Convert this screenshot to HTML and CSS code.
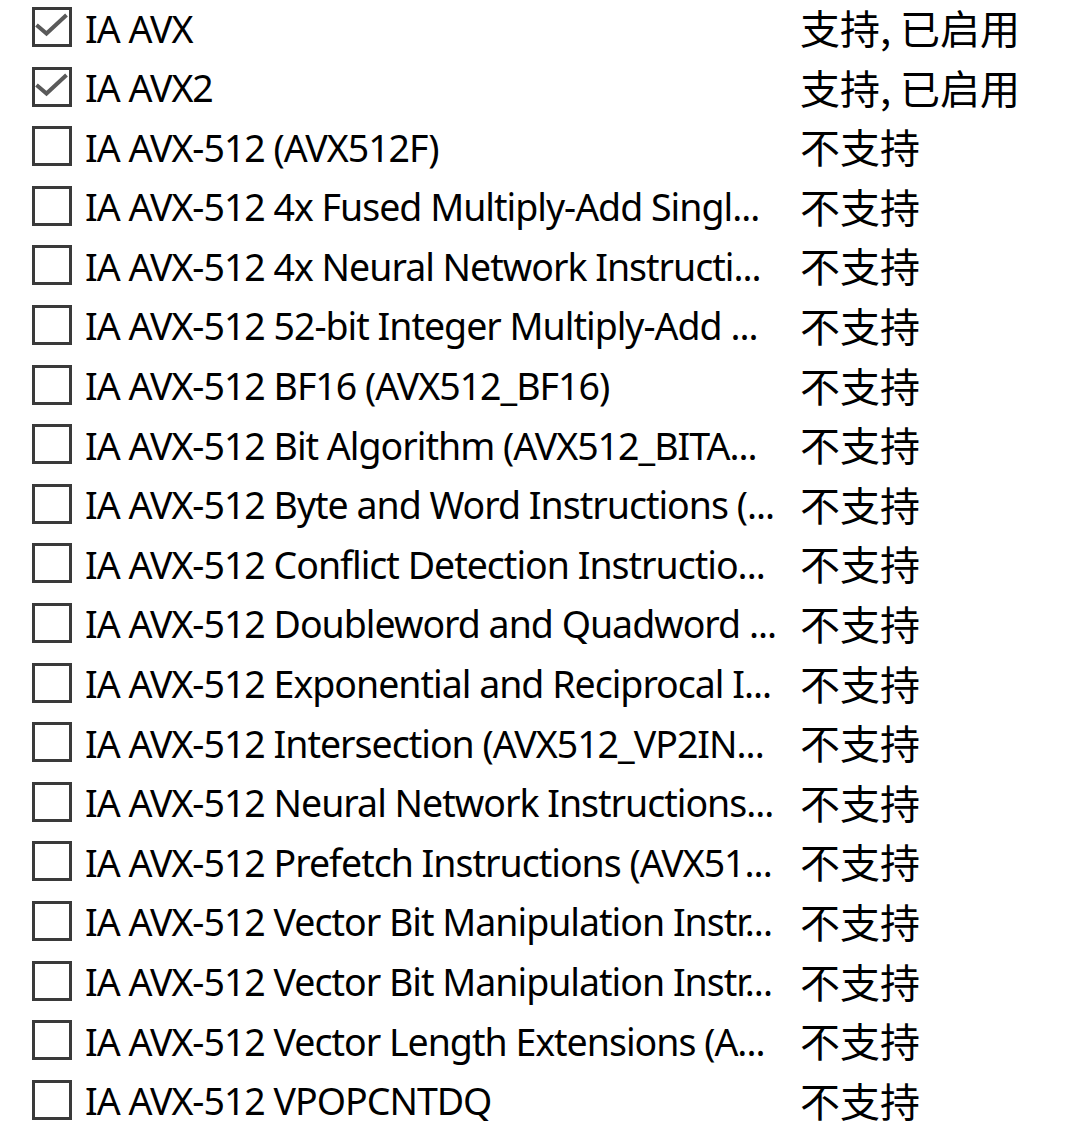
FILE: index.html
```html
<!DOCTYPE html>
<html lang="zh">
<head>
<meta charset="utf-8">
<title>CPU features</title>
<link rel="stylesheet" href="styles.css">
</head>
<body>
<ul class="list">
  <li class="row"><span class="box checked"><svg viewBox="0 0 40 40"><path d="M4.5 18 L14.5 26.5 L34.5 8"/></svg></span><span class="name">IA AVX</span><span class="status">支持, 已启用</span></li>
  <li class="row"><span class="box checked"><svg viewBox="0 0 40 40"><path d="M4.5 18 L14.5 26.5 L34.5 8"/></svg></span><span class="name">IA AVX2</span><span class="status">支持, 已启用</span></li>
  <li class="row"><span class="box"></span><span class="name">IA AVX-512 (AVX512F)</span><span class="status">不支持</span></li>
  <li class="row"><span class="box"></span><span class="name">IA AVX-512 4x Fused Multiply-Add Singl...</span><span class="status">不支持</span></li>
  <li class="row"><span class="box"></span><span class="name">IA AVX-512 4x Neural Network Instructi...</span><span class="status">不支持</span></li>
  <li class="row"><span class="box"></span><span class="name">IA AVX-512 52-bit Integer Multiply-Add ...</span><span class="status">不支持</span></li>
  <li class="row"><span class="box"></span><span class="name">IA AVX-512 BF16 (AVX512_BF16)</span><span class="status">不支持</span></li>
  <li class="row"><span class="box"></span><span class="name">IA AVX-512 Bit Algorithm (AVX512_BITA...</span><span class="status">不支持</span></li>
  <li class="row"><span class="box"></span><span class="name">IA AVX-512 Byte and Word Instructions (...</span><span class="status">不支持</span></li>
  <li class="row"><span class="box"></span><span class="name">IA AVX-512 Conflict Detection Instructio...</span><span class="status">不支持</span></li>
  <li class="row"><span class="box"></span><span class="name">IA AVX-512 Doubleword and Quadword ...</span><span class="status">不支持</span></li>
  <li class="row"><span class="box"></span><span class="name">IA AVX-512 Exponential and Reciprocal I...</span><span class="status">不支持</span></li>
  <li class="row"><span class="box"></span><span class="name">IA AVX-512 Intersection (AVX512_VP2IN...</span><span class="status">不支持</span></li>
  <li class="row"><span class="box"></span><span class="name">IA AVX-512 Neural Network Instructions...</span><span class="status">不支持</span></li>
  <li class="row"><span class="box"></span><span class="name">IA AVX-512 Prefetch Instructions (AVX51...</span><span class="status">不支持</span></li>
  <li class="row"><span class="box"></span><span class="name">IA AVX-512 Vector Bit Manipulation Instr...</span><span class="status">不支持</span></li>
  <li class="row"><span class="box"></span><span class="name">IA AVX-512 Vector Bit Manipulation Instr...</span><span class="status">不支持</span></li>
  <li class="row"><span class="box"></span><span class="name">IA AVX-512 Vector Length Extensions (A...</span><span class="status">不支持</span></li>
  <li class="row"><span class="box"></span><span class="name">IA AVX-512 VPOPCNTDQ</span><span class="status">不支持</span></li>
</ul>
</body>
</html>
```
FILE: styles.css
```css
html, body {
  margin: 0;
  padding: 0;
  background: #ffffff;
}
body {
  width: 1080px;
  height: 1130px;
  overflow: hidden;
  font-family: "Noto Sans", "Noto Sans CJK SC", sans-serif;
  color: #000000;
}
.list {
  list-style: none;
  margin: 0;
  padding: 7px 0 0 0;
}
.row {
  display: flex;
  align-items: flex-start;
  height: 59.6px;
}
.box {
  box-sizing: border-box;
  width: 40px;
  height: 40px;
  margin-left: 32px;
  border: 3px solid #3a3a3a;
  background: #ffffff;
  position: relative;
  flex: none;
}
.box svg {
  position: absolute;
  left: -3px;
  top: -3px;
  width: 40px;
  height: 40px;
}
.box svg path {
  fill: none;
  stroke: #5a5a5a;
  stroke-width: 4;
  stroke-linejoin: miter;
}
.name {
  width: 715px;
  margin-left: 13px;
  margin-top: -2.5px;
  flex: none;
  white-space: nowrap;
  font-size: 37.5px;
  letter-spacing: -1px;
  line-height: 48px;
}
.status {
  margin-top: -4px;
  font-family: "Noto Sans CJK SC", sans-serif;
  font-size: 40px;
  line-height: 48px;
  white-space: nowrap;
}
```
